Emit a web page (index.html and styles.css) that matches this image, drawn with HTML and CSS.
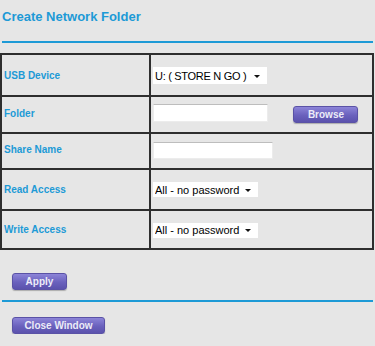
FILE: index.html
```html
<!DOCTYPE html>
<html lang="en">
<head>
    <meta charset="UTF-8">
    <meta name="viewport" content="width=device-width, initial-scale=1.0">
    <title>Create Network Folder</title>
    <link rel="stylesheet" href="styles.css">
</head>
<body>
    <h1 class="page-title">Create Network Folder</h1>
    <div class="rule"></div>

    <table class="form-table">
        <tr class="row-device">
            <td class="label">USB Device</td>
            <td class="field">
                <span class="select-wrap">
                    <select class="select select-wide">
                        <option>U: ( STORE N GO )</option>
                    </select>
                </span>
            </td>
        </tr>
        <tr class="row-folder">
            <td class="label">Folder</td>
            <td class="field">
                <input type="text" class="text-input folder-input">
                <button class="btn btn-browse">Browse</button>
            </td>
        </tr>
        <tr class="row-share">
            <td class="label">Share Name</td>
            <td class="field">
                <input type="text" class="text-input share-input">
            </td>
        </tr>
        <tr class="row-read">
            <td class="label">Read Access</td>
            <td class="field">
                <span class="select-wrap">
                    <select class="select select-access">
                        <option>All - no password</option>
                    </select>
                </span>
            </td>
        </tr>
        <tr class="row-write">
            <td class="label">Write Access</td>
            <td class="field">
                <span class="select-wrap">
                    <select class="select select-access">
                        <option>All - no password</option>
                    </select>
                </span>
            </td>
        </tr>
    </table>

    <div class="actions">
        <button class="btn btn-apply">Apply</button>
    </div>
    <div class="rule rule-bottom"></div>
    <div class="actions actions-close">
        <button class="btn btn-close">Close Window</button>
    </div>
</body>
</html>
```

FILE: styles.css
```css
* {
    box-sizing: border-box;
}

body {
    margin: 0;
    background-color: #e6e6e6;
    font-family: "Liberation Sans", Arial, sans-serif;
    color: #000;
}

.page-title {
    margin: 0;
    padding: 9px 2px 0;
    font-size: 13px;
    line-height: 16px;
    font-weight: bold;
    color: #1d9ad6;
}

.rule {
    height: 2px;
    margin: 16px 2px 0;
    background-color: #1d9ad6;
}

.form-table {
    width: 374px;
    margin-top: 10px;
    border-collapse: separate;
    border-spacing: 0;
    border: 1px solid #2e2e2e;
}

.form-table td {
    border: 1px solid #2e2e2e;
    padding: 0;
    vertical-align: middle;
}

.row-device td { height: 42px; }
.row-folder td { height: 37px; padding-bottom: 3px; }
.row-share td { height: 36px; padding-bottom: 3px; }
.row-read td { height: 41px; padding-bottom: 1px; }
.row-write td { height: 39px; }

.label {
    width: 149px;
    padding-left: 2px !important;
    font-size: 10px;
    font-weight: bold;
    color: #1d9ad6;
}

.field {
    padding-left: 2px !important;
}

.select-wrap {
    position: relative;
    display: inline-block;
    vertical-align: middle;
}

.select-wrap::after {
    content: "";
    position: absolute;
    right: 7px;
    top: 50%;
    margin-top: -1px;
    border-left: 3px solid transparent;
    border-right: 3px solid transparent;
    border-top: 3px solid #111;
    pointer-events: none;
}

.select {
    appearance: none;
    -webkit-appearance: none;
    display: block;
    margin: 0;
    border: 0;
    border-radius: 0;
    background-color: #fff;
    font-family: "Liberation Sans", Arial, sans-serif;
    font-size: 11px;
    color: #000;
    padding: 0 0 0 2px;
}

.select-wide {
    width: 114px;
    height: 17px;
    letter-spacing: -0.3px;
}

.select-access {
    width: 105px;
    height: 15px;
}

.text-input {
    vertical-align: middle;
    margin: 0;
    padding: 0 2px;
    border: 1px solid #ececec;
    border-top-color: #bdbdbd;
    background-color: #fff;
    font-size: 11px;
}

.folder-input {
    width: 115px;
    height: 18px;
}

.share-input {
    width: 120px;
    height: 17px;
}

.btn {
    height: 17px;
    padding: 0;
    border: 1px solid #5a52a6;
    border-radius: 3px;
    background: linear-gradient(#8c84d8, #6a61bd 55%, #5b52ad);
    box-shadow: 0 1px 1px rgba(0, 0, 0, 0.25);
    font-family: "Liberation Sans", Arial, sans-serif;
    font-size: 10px;
    font-weight: bold;
    color: #ececf8;
    cursor: pointer;
    vertical-align: middle;
}

.btn-browse {
    width: 65px;
    margin-left: 21px;
    margin-top: 2px;
}

.btn-apply {
    width: 55px;
}

.btn-close {
    width: 93px;
}

.actions {
    padding-left: 12px;
    margin-top: 23px;
    line-height: 0;
}

.rule-bottom {
    margin-top: 10px;
}

.actions-close {
    margin-top: 15px;
}
```
